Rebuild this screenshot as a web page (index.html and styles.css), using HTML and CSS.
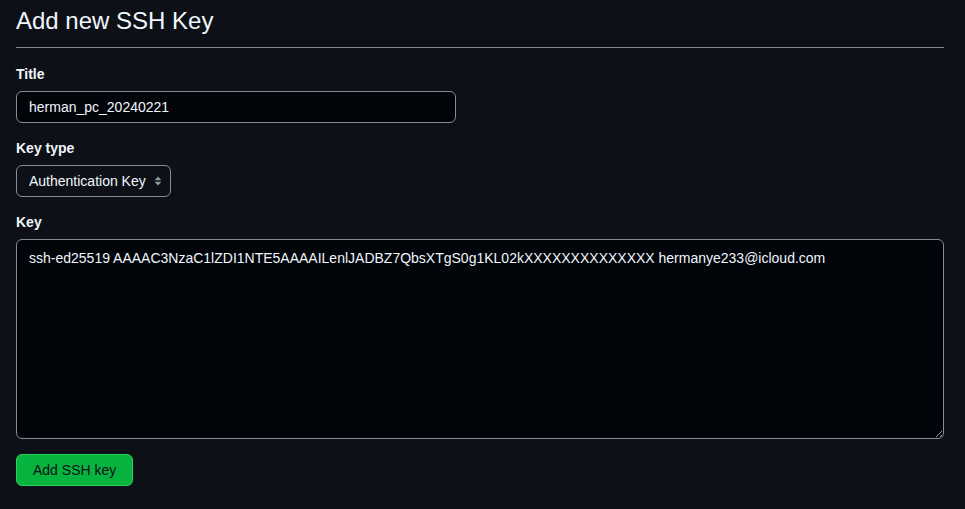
FILE: index.html
```html
<!DOCTYPE html>
<html>
<head>
<meta charset="utf-8">
<link rel="stylesheet" href="styles.css">
</head>
<body>
<div class="page">
  <div class="subhead"><h2 class="subhead-title">Add new SSH Key</h2></div>
  <form class="form">
    <div class="group">
      <label class="label" for="t">Title</label>
      <input id="t" class="input title-input" type="text" value="herman_pc_20240221">
    </div>
    <div class="group">
      <label class="label" for="k">Key type</label>
      <div class="select-wrap">
        <select id="k" class="select"><option>Authentication Key</option></select>
        <svg class="select-arrow" width="8" height="12" viewBox="0 0 8 12"><path d="M4 1.5 7.4 5.2H0.6z M4 10.5 0.6 6.8h6.8z" fill="#9198a1"/></svg>
      </div>
    </div>
    <div class="group">
      <label class="label" for="key">Key</label>
      <textarea id="key" class="input textarea">ssh-ed25519 AAAAC3NzaC1lZDI1NTE5AAAAILenlJADBZ7QbsXTgS0g1KL02kXXXXXXXXXXXXXX hermanye233@icloud.com</textarea>
    </div>
    <div class="actions">
      <button type="button" class="btn-primary">Add SSH key</button>
    </div>
  </form>
</div>
</body>
</html>
```
FILE: styles.css
```css
html, body {
  margin: 0;
  background: #0d1117;
}
body {
  font-family: "Liberation Sans", Arial, sans-serif;
  color: #e6edf3;
  font-size: 14px;
}
.page {
  padding: 3px 21px 0 16px;
}
.subhead {
  border-bottom: 1px solid #808791;
  padding-bottom: 8px;
  margin-bottom: 16px;
}
.subhead-title {
  margin: 0;
  font-size: 24px;
  font-weight: 400;
  line-height: 36px;
  color: #f0f6fc;
}
.form {
  display: flex;
  flex-direction: column;
  gap: 15px;
}
.group {
  display: flex;
  flex-direction: column;
  align-items: flex-start;
}
.label {
  font-weight: 700;
  font-size: 14px;
  line-height: 21px;
  margin-bottom: 6px;
  color: #f0f6fc;
}
.input {
  box-sizing: border-box;
  background: #010409;
  border: 1px solid #858c96;
  border-radius: 6px;
  color: #f0f6fc;
  font-family: "Liberation Sans", Arial, sans-serif;
  font-size: 14px;
  line-height: 20px;
  outline: none;
}
.title-input {
  width: 440px;
  height: 32px;
  padding: 5px 12px;
}
.select-wrap {
  position: relative;
}
.select {
  appearance: none;
  -webkit-appearance: none;
  box-sizing: border-box;
  height: 32px;
  width: 155px;
  padding: 5px 24px 5px 12px;
  background: #0d1117;
  border: 1px solid #858c96;
  border-radius: 6px;
  color: #f0f6fc;
  font-family: "Liberation Sans", Arial, sans-serif;
  font-size: 14px;
  line-height: 20px;
  outline: none;
}
.select-arrow {
  position: absolute;
  right: 9px;
  top: 10px;
  pointer-events: none;
}
.textarea {
  width: 100%;
  height: 200px;
  padding: 8px 12px;
  resize: vertical;
  display: block;
}
.actions {
  padding-top: 0;
}
.btn-primary {
  box-sizing: border-box;
  height: 32px;
  padding: 0 16px;
  background: #06b43f;
  border: 1px solid #2bd35c;
  border-radius: 6px;
  color: #0d1117;
  font-family: "Liberation Sans", Arial, sans-serif;
  font-size: 14px;
  font-weight: 400;
  cursor: pointer;
}
```
